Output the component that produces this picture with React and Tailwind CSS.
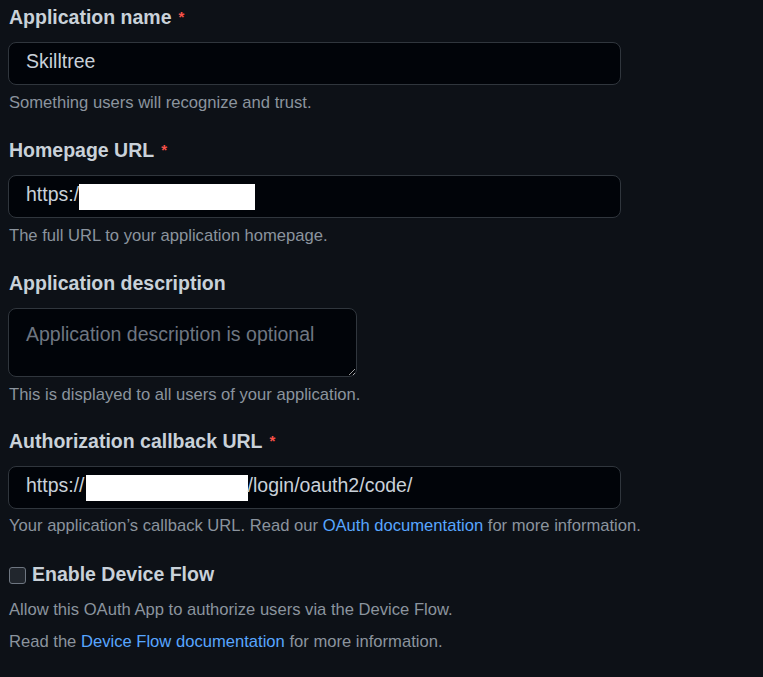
import { useState } from 'react';

const font = { fontFamily: '"Liberation Sans", Arial, sans-serif' };

function Label({ children, required }) {
    return (
        <div className="text-[19.5px] font-bold leading-[28px] text-[#c9d1d9]">
            {children}
            {required && <span className="ml-[7px] align-top text-[15px] text-[#f85149]">*</span>}
        </div>
    );
}

function Note({ children, className = '' }) {
    return <p className={`text-[16.6px] leading-[22px] text-[#8b949e] ${className}`}>{children}</p>;
}

function FieldBox({ children }) {
    return (
        <div className="mt-[11px] flex h-[43px] w-[613px] items-center rounded-[8px] border border-[#30363d] bg-[#010409] px-[17px] pb-[3px] text-[19.5px] text-[#c9d1d9]">
            {children}
        </div>
    );
}

function Redacted({ w }) {
    return <span className="inline-block h-[26px] bg-white" style={{ width: w }} />;
}

export default function App() {
    const [deviceFlow, setDeviceFlow] = useState(false);

    return (
        <div className="min-h-[677px] w-full bg-[#0d1117] pl-[9px] pt-[3px]" style={font}>
            {/* Application name */}
            <Label required>Application name</Label>
            <div className="-ml-px">
                <FieldBox>Skilltree</FieldBox>
            </div>
            <Note className="mt-[7px]">Something users will recognize and trust.</Note>

            {/* Homepage URL */}
            <div className="mt-[22px]">
                <Label required>Homepage URL</Label>
            </div>
            <div className="-ml-px">
                <FieldBox>
                    <span>https:/</span>
                    <span className="mt-[3px] flex">
                        <Redacted w={176} />
                    </span>
                </FieldBox>
            </div>
            <Note className="mt-[7px]">The full URL to your application homepage.</Note>

            {/* Description */}
            <div className="mt-[22px]">
                <Label>Application description</Label>
            </div>
            <textarea
                placeholder="Application description is optional"
                className="-ml-px mt-[11px] block h-[69px] w-[349px] rounded-[8px] border border-[#30363d] bg-[#010409] px-[17px] pt-[11px] text-[19.5px] leading-[28px] text-[#c9d1d9] outline-none placeholder:text-[#6e7681]"
            />
            <Note className="mt-[7px]">This is displayed to all users of your application.</Note>

            {/* Callback URL */}
            <div className="mt-[21px]">
                <Label required>Authorization callback URL</Label>
            </div>
            <div className="-ml-px mt-[2px]">
                <FieldBox>
                    <span>https://</span>
                    <span className="ml-px mt-[3px] flex">
                        <Redacted w={162} />
                    </span>
                    <span>/login/oauth2/code/</span>
                </FieldBox>
            </div>
            <Note className="mt-[6px]">
                Your application’s callback URL. Read our{' '}
                <a href="#" className="text-[#58a6ff]">OAuth documentation</a> for more information.
            </Note>

            {/* Device flow */}
            <label className="mt-[24px] flex h-[28px] cursor-pointer items-center gap-[6px]">
                <input
                    type="checkbox"
                    checked={deviceFlow}
                    onChange={(e) => setDeviceFlow(e.target.checked)}
                    className="h-[17px] w-[17px] appearance-none rounded-[3px] border border-[#6e7681] bg-[#21262d] checked:bg-[#1f6feb]"
                />
                <span className="text-[19.5px] font-bold text-[#c9d1d9]">Enable Device Flow</span>
            </label>
            <Note className="mt-[5px] leading-[32px]">Allow this OAuth App to authorize users via the Device Flow.</Note>
            <Note className="leading-[32px]">
                Read the <a href="#" className="text-[#58a6ff]">Device Flow documentation</a> for more information.
            </Note>
        </div>
    );
}
